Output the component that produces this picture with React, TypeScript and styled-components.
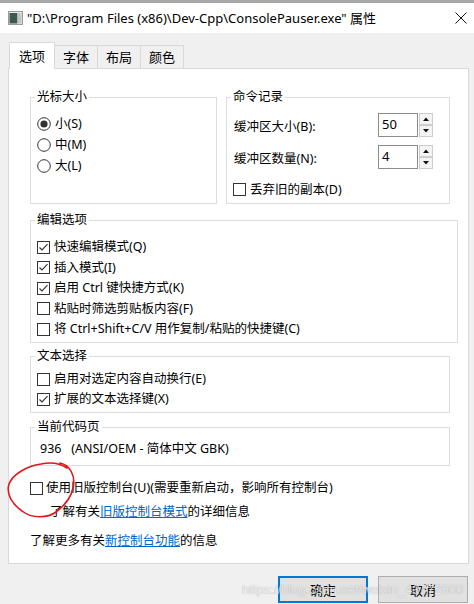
import React from 'react';
import styled, { createGlobalStyle } from 'styled-components';

const GlobalStyle = createGlobalStyle`
  html, body { margin: 0; padding: 0; background: #f0f0f0; }
  body {
    font-family: "Noto Sans", "Noto Sans CJK SC", sans-serif;
    font-size: 12.5px;
    color: #000;
  }
  * { box-sizing: border-box; }
`;

const Window = styled.div`
  position: relative;
  width: 474px;
  height: 604px;
  background: #f0f0f0;
  display: flex;
  flex-direction: column;
  overflow: hidden;
`;

const TopStrip = styled.div`
  height: 3px;
  background: #a8a8a8;
`;

const TitleBar = styled.div`
  height: 30px;
  background: #fff;
  display: flex;
  align-items: center;
  padding: 0 7px 0 8px;
  gap: 4px;
`;

const TitleText = styled.div`
  flex: 1;
  font-size: 13px;
  line-height: 20px;
  white-space: nowrap;
`;

const Body = styled.div`
  display: flex;
  flex-direction: column;
  padding: 9px 5px 0 8px;
`;

const TabRow = styled.div`
  display: flex;
  align-items: flex-end;
  height: 26px;
  padding-left: 1px;
`;

const Tab = styled.div<{ $active?: boolean }>`
  position: relative;
  z-index: ${(p) => (p.$active ? 1 : 0)};
  height: ${(p) => (p.$active ? 27 : 23)}px;
  margin-bottom: ${(p) => (p.$active ? -1 : 0)}px;
  padding: ${(p) => (p.$active ? '0 9px' : '0 8px')};
  background: ${(p) => (p.$active ? '#fff' : '#f0f0f0')};
  border: 1px solid #d9d9d9;
  border-bottom: none;
  margin-left: ${(p) => (p.$active ? 0 : -1)}px;
  font-size: 13px;
  line-height: ${(p) => (p.$active ? 22 : 20)}px;
  display: flex;
  align-items: center;
  &:first-child { margin-left: 0; }
`;

const Panel = styled.div`
  height: 496px;
  background: #fff;
  border: 1px solid #d9d9d9;
  padding: 28px 0 0 21px;
  display: flex;
  flex-direction: column;
`;

const TopRow = styled.div`
  display: flex;
  gap: 9px;
`;

const GroupBox = styled.div<{ $width: number; $height: number; $mt?: number }>`
  width: ${(p) => p.$width}px;
  height: ${(p) => p.$height}px;
  margin-top: ${(p) => p.$mt ?? 0}px;
  border: 1px solid #dcdcdc;
  padding: 0 0 0 4px;
  display: flex;
  flex-direction: column;
`;

const Legend = styled.div`
  align-self: flex-start;
  margin-top: -10px;
  padding: 0 2px;
  background: #fff;
  line-height: 18px;
  white-space: nowrap;
`;

const Items = styled.div<{ $pt: number; $pl?: number }>`
  display: flex;
  flex-direction: column;
  padding-top: ${(p) => p.$pt}px;
  padding-left: ${(p) => p.$pl ?? 2}px;
`;

const Item = styled.div<{ $h?: number }>`
  display: flex;
  align-items: center;
  gap: 4px;
  height: ${(p) => p.$h ?? 20.5}px;
  white-space: nowrap;
  line-height: 18px;
`;

const FieldRow = styled.div<{ $mt: number }>`
  display: flex;
  align-items: center;
  justify-content: space-between;
  height: 24px;
  margin-top: ${(p) => p.$mt}px;
  padding: 0 16px 0 3px;
  white-space: nowrap;
`;

const Spinner = styled.div`
  display: flex;
  gap: 1px;
  height: 24px;
`;

const SpinInput = styled.div`
  width: 40px;
  height: 24px;
  border: 1px solid #8c8c8c;
  background: #fff;
  padding-left: 3px;
  font-size: 13px;
  line-height: 21px;
`;

const SpinButtons = styled.div`
  display: flex;
  flex-direction: column;
  width: 14px;
`;

const SpinButton = styled.div`
  height: 12px;
  border: 1px solid #cdcdcd;
  background: #f4f4f4;
  display: flex;
  align-items: center;
  justify-content: center;
`;

const CodeText = styled.div`
  padding: 3px 0 0 5px;
  line-height: 20px;
  white-space: pre;
`;

const LooseRow = styled.div<{ $mt: number; $ml?: number }>`
  display: flex;
  align-items: center;
  gap: 3px;
  height: 20px;
  margin-top: ${(p) => p.$mt}px;
  margin-left: ${(p) => p.$ml ?? 0}px;
  white-space: nowrap;
  line-height: 18px;
`;

const Link = styled.span`
  color: #0066cc;
  text-decoration: underline;
`;

const ButtonRow = styled.div`
  display: flex;
  justify-content: flex-end;
  gap: 10px;
  margin-top: 12px;
  padding-right: 1px;
`;

const Button = styled.div<{ $primary?: boolean }>`
  width: 90px;
  height: 27px;
  background: #e1e1e1;
  border: ${(p) => (p.$primary ? '2px solid #0078d7' : '1px solid #adadad')};
  display: flex;
  align-items: center;
  justify-content: center;
  font-size: 13px;
`;

const Watermark = styled.div`
  position: absolute;
  left: 242px;
  top: 582px;
  font-family: "Liberation Sans", Arial, sans-serif;
  font-size: 13px;
  color: rgba(255, 255, 255, 0.75);
  text-shadow: 0 0 1px rgba(90, 90, 90, 0.55);
  white-space: nowrap;
  pointer-events: none;
`;

const Annotation = styled.svg`
  position: absolute;
  left: 0;
  top: 455px;
  pointer-events: none;
`;

const CheckBox = ({ checked }: { checked?: boolean }) => (
  <svg width="13" height="13" viewBox="0 0 13 13" style={{ flex: 'none' }}>
    <rect x="0.5" y="0.5" width="12" height="12" fill="#fff" stroke="#333" />
    {checked && (
      <polyline points="2.5,6.5 5,9 10.5,3.2" fill="none" stroke="#333" strokeWidth="1.1" />
    )}
  </svg>
);

const Radio = ({ checked }: { checked?: boolean }) => (
  <svg width="14" height="14" viewBox="0 0 14 14" style={{ flex: 'none' }}>
    <circle cx="7" cy="7" r="6.3" fill="#fff" stroke="#333" />
    {checked && <circle cx="7" cy="7" r="3.6" fill="#333" />}
  </svg>
);

const AppIcon = () => (
  <svg width="15" height="14" viewBox="0 0 15 14">
    <rect x="0.5" y="0.5" width="14" height="13" fill="#e8e8e8" stroke="#9a9a9a" />
    <rect x="1.5" y="2" width="8" height="10.5" fill="#3d5a50" />
    <rect x="9.5" y="2" width="4" height="10.5" fill="#c4c4c4" />
  </svg>
);

const CloseIcon = () => (
  <svg width="12" height="12" viewBox="0 0 12 12">
    <path d="M0.5 0.5 L11.5 11.5 M11.5 0.5 L0.5 11.5" stroke="#111" strokeWidth="1" />
  </svg>
);

const Tri = ({ up }: { up?: boolean }) => (
  <svg width="6" height="4" viewBox="0 0 6 4">
    <path d={up ? 'M0 4 L3 0.5 L6 4 Z' : 'M0 0 L3 3.5 L6 0 Z'} fill="#111" />
  </svg>
);

const Spin = ({ value }: { value: string }) => (
  <Spinner>
    <SpinInput>{value}</SpinInput>
    <SpinButtons>
      <SpinButton><Tri up /></SpinButton>
      <SpinButton><Tri /></SpinButton>
    </SpinButtons>
  </Spinner>
);

export default function App() {
  return (
    <Window>
      <GlobalStyle />
      <TopStrip />
      <TitleBar>
        <AppIcon />
        <TitleText>"D:\Program Files (x86)\Dev-Cpp\ConsolePauser.exe" 属性</TitleText>
        <CloseIcon />
      </TitleBar>
      <Body>
        <TabRow>
          <Tab $active>选项</Tab>
          <Tab>字体</Tab>
          <Tab>布局</Tab>
          <Tab>颜色</Tab>
        </TabRow>
        <Panel>
          <TopRow>
            <GroupBox $width={187} $height={107}>
              <Legend>光标大小</Legend>
              <Items $pt={7}>
                <Item $h={21}><Radio checked />小(S)</Item>
                <Item $h={21}><Radio />中(M)</Item>
                <Item $h={21}><Radio />大(L)</Item>
              </Items>
            </GroupBox>
            <GroupBox $width={224} $height={107}>
              <Legend>命令记录</Legend>
              <FieldRow $mt={7}>
                <span>缓冲区大小(B):</span>
                <Spin value="50" />
              </FieldRow>
              <FieldRow $mt={8}>
                <span>缓冲区数量(N):</span>
                <Spin value="4" />
              </FieldRow>
              <Items $pt={10}>
                <Item $h={21}><CheckBox />丢弃旧的副本(D)</Item>
              </Items>
            </GroupBox>
          </TopRow>
          <GroupBox $width={428} $height={123} $mt={16}>
            <Legend>编辑选项</Legend>
            <Items $pt={8}>
              <Item><CheckBox checked />快速编辑模式(Q)</Item>
              <Item><CheckBox checked />插入模式(I)</Item>
              <Item><CheckBox checked />启用 Ctrl 键快捷方式(K)</Item>
              <Item><CheckBox />粘贴时筛选剪贴板内容(F)</Item>
              <Item><CheckBox />将 Ctrl+Shift+C/V 用作复制/粘贴的快捷键(C)</Item>
            </Items>
          </GroupBox>
          <GroupBox $width={420} $height={57} $mt={13}>
            <Legend>文本选择</Legend>
            <Items $pt={4}>
              <Item $h={20}><CheckBox />启用对选定内容自动换行(E)</Item>
              <Item $h={20}><CheckBox checked />扩展的文本选择键(X)</Item>
            </Items>
          </GroupBox>
          <GroupBox $width={420} $height={39} $mt={14}>
            <Legend>当前代码页</Legend>
            <CodeText>{'936   (ANSI/OEM - 简体中文 GBK)'}</CodeText>
          </GroupBox>
          <LooseRow $mt={12}>
            <CheckBox />使用旧版控制台(U)(需要重新启动，影响所有控制台)
          </LooseRow>
          <LooseRow $mt={4} $ml={20}>
            <span>了解有关<Link>旧版控制台模式</Link>的详细信息</span>
          </LooseRow>
          <LooseRow $mt={9}>
            <span>了解更多有关<Link>新控制台功能</Link>的信息</span>
          </LooseRow>
        </Panel>
        <ButtonRow>
          <Button $primary>确定</Button>
          <Button>取消</Button>
        </ButtonRow>
      </Body>
      <Annotation width="90" height="70" viewBox="0 455 90 70">
        <path
          d="M60 463 C70 465 76 476 73 488 C71 498 64 506 56 512 C48 518 32 519 22 511 C12 504 6 494 9 484 C13 474 27 466 41 464 C50 462 58 462 67 468"
          fill="none"
          stroke="#e4141b"
          strokeWidth="1.6"
          strokeLinecap="round"
        />
      </Annotation>
      <Watermark>https://blog.csdn.net/weixin_43772600</Watermark>
    </Window>
  );
}
